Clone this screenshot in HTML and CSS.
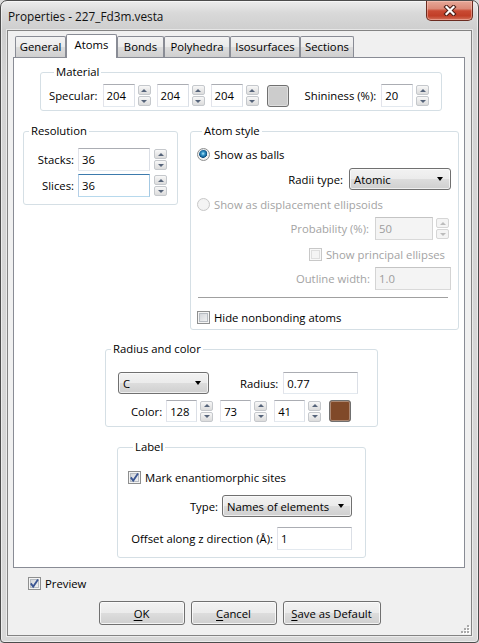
FILE: index.html
```html
<!DOCTYPE html>
<html lang="en">
<head>
<meta charset="utf-8">
<title>Properties - 227_Fd3m.vesta</title>
<link rel="stylesheet" href="styles.css">
</head>
<body>
<div class="window">
  <div class="titlebar">
    <span class="title">Properties - 227_Fd3m.vesta</span>
    <span class="close">
      <svg width="14" height="11" viewBox="0 0 14 11">
        <path d="M3.5 2 L10.5 9 M10.5 2 L3.5 9" stroke="#4a1d16" stroke-width="4.2" stroke-linecap="square"/>
        <path d="M3.5 2 L10.5 9 M10.5 2 L3.5 9" stroke="#fff" stroke-width="2.2" stroke-linecap="square"/>
      </svg>
    </span>
  </div>

  <div class="client">
    <div class="tabs">
      <span class="tab t-general">General</span>
      <span class="tab active t-atoms">Atoms</span>
      <span class="tab t-bonds">Bonds</span>
      <span class="tab t-poly">Polyhedra</span>
      <span class="tab t-iso">Isosurfaces</span>
      <span class="tab t-sect">Sections</span>
    </div>

    <div class="panel">
      <fieldset class="group material">
        <legend>Material</legend>
        <div class="row">
          <span class="lbl">Specular:</span>
          <span class="field w32 ml5">204</span><span class="spin ml3"><i></i><i class="down"></i></span>
          <span class="field w32 ml6">204</span><span class="spin ml3"><i></i><i class="down"></i></span>
          <span class="field w32 ml6">204</span><span class="spin ml3"><i></i><i class="down"></i></span>
          <span class="swatch grey ml8"></span>
          <span class="lbl ml16">Shininess (%):</span>
          <span class="field w32 ml5">20</span><span class="spin ml3"><i></i><i class="down"></i></span>
        </div>
      </fieldset>

      <div class="mid">
        <fieldset class="group resolution">
          <legend>Resolution</legend>
          <div class="row end first">
            <span class="lbl">Stacks:</span>
            <span class="field w72 ml4">36</span><span class="spin ml4"><i></i><i class="down"></i></span>
          </div>
          <div class="row end second">
            <span class="lbl">Slices:</span>
            <span class="field w72 ml4 focus">36</span><span class="spin ml4"><i></i><i class="down"></i></span>
          </div>
        </fieldset>

        <fieldset class="group atom-style">
          <legend>Atom style</legend>
          <div class="opt r-balls"><span class="radio on"></span>Show as balls</div>
          <div class="row end r-radii">
            <span class="lbl">Radii type:</span>
            <span class="combo w102 ml6">Atomic</span>
          </div>
          <div class="opt off r-ellip"><span class="radio"></span>Show as displacement ellipsoids</div>
          <div class="row end off r-prob">
            <span class="lbl">Probability (%):</span>
            <span class="field w58 ml6 dis">50</span><span class="spin ml3 dis"><i></i><i class="down"></i></span>
          </div>
          <div class="opt off end r-principal"><span class="cb dis"></span>Show principal ellipses</div>
          <div class="row end off r-outline">
            <span class="lbl">Outline width:</span>
            <span class="field w76 ml5 dis">1.0</span>
          </div>
          <hr class="sep">
          <div class="opt r-hide"><span class="cb"></span>Hide nonbonding atoms</div>
        </fieldset>
      </div>

      <fieldset class="group radius">
        <legend>Radius and color</legend>
        <div class="row r-elem">
          <span class="combo w91">C</span>
          <span class="lbl ml31">Radius:</span>
          <span class="field w75 h22 ml5">0.77</span>
        </div>
        <div class="row r-color">
          <span class="lbl">Color:</span>
          <span class="field w31 h22 ml4">128</span><span class="spin ml3"><i></i><i class="down"></i></span>
          <span class="field w31 h22 ml7">73</span><span class="spin ml3"><i></i><i class="down"></i></span>
          <span class="field w31 h22 ml7">41</span><span class="spin ml3"><i></i><i class="down"></i></span>
          <span class="swatch brown ml8"></span>
        </div>
      </fieldset>

      <fieldset class="group label">
        <legend>Label</legend>
        <div class="opt r-mark">
          <span class="cb">
            <svg width="11" height="11" viewBox="0 0 11 11"><path d="M1.8 5.4 L4.2 8.6 L9 1.6" fill="none" stroke="#3a5592" stroke-width="1.8"/></svg>
          </span>Mark enantiomorphic sites
        </div>
        <div class="row end r-type">
          <span class="lbl">Type:</span>
          <span class="combo w130 ml4">Names of elements</span>
        </div>
        <div class="row end r-offset">
          <span class="lbl">Offset along z direction (Å):</span>
          <span class="field w75 ml4">1</span>
        </div>
      </fieldset>
    </div>

    <div class="opt preview">
      <span class="cb">
        <svg width="11" height="11" viewBox="0 0 11 11"><path d="M1.8 5.4 L4.2 8.6 L9 1.6" fill="none" stroke="#3a5592" stroke-width="1.8"/></svg>
      </span>Preview
    </div>

    <div class="buttons">
      <span class="btn w86"><u>O</u>K</span>
      <span class="btn w86"><u>C</u>ancel</span>
      <span class="btn w98"><u>S</u>ave as Default</span>
    </div>

    <svg class="grip" width="10" height="10" viewBox="0 0 10 10">
      <g fill="#fff"><rect x="8" y="2" width="2" height="2"/><rect x="8" y="5" width="2" height="2"/><rect x="5" y="5" width="2" height="2"/><rect x="8" y="8" width="2" height="2"/><rect x="5" y="8" width="2" height="2"/><rect x="2" y="8" width="2" height="2"/></g>
      <g fill="#a9a9a9"><rect x="7" y="1" width="2" height="2"/><rect x="7" y="4" width="2" height="2"/><rect x="4" y="4" width="2" height="2"/><rect x="7" y="7" width="2" height="2"/><rect x="4" y="7" width="2" height="2"/><rect x="1" y="7" width="2" height="2"/></g>
    </svg>
  </div>
</div>
</body>
</html>
```

FILE: styles.css
```css
* { box-sizing: border-box; }

html, body {
  margin: 0;
  padding: 0;
}

body {
  width: 479px;
  height: 643px;
  overflow: hidden;
  background: #dcdcdc;
  font-family: "Open Sans", "Noto Sans", sans-serif;
  font-size: 11.3px;
  color: #000;
}

/* ---------- window frame ---------- */
.window {
  width: 479px;
  height: 643px;
  border: 1px solid #4c4c4c;
  border-radius: 7px 7px 4px 4px;
  background: linear-gradient(180deg, #ececec 0, #d9d9d9 12px, #cecece 29px, #d4d4d4 80px, #d8d8d8 100%);
  padding: 0 6px 6px;
  display: flex;
  flex-direction: column;
  box-shadow: inset 0 0 0 1px rgba(255, 255, 255, 0.55);
}

.titlebar {
  height: 29px;
  display: flex;
  align-items: flex-start;
}

.title {
  flex: 1;
  font-size: 11.8px;
  line-height: 30px;
  padding-left: 1px;
  color: #111;
}

.close {
  width: 47px;
  height: 20px;
  margin-right: -1px;
  display: flex;
  align-items: center;
  justify-content: center;
  border: 1px solid #6b2b20;
  border-top: none;
  border-radius: 0 0 5px 5px;
  background: linear-gradient(180deg, #e7a898 0, #dc8a78 40%, #c94a33 52%, #c13e27 78%, #d3715a 100%);
  box-shadow: inset 0 0 0 1px rgba(255, 210, 200, 0.45);
}

.client {
  position: relative;
  flex: 1;
  border: 1px solid #838383;
  background: #f0f0f0;
  display: flex;
  flex-direction: column;
  box-shadow: 0 0 0 1px rgba(255, 255, 255, 0.5);
}

/* ---------- tabs ---------- */
.tabs {
  display: flex;
  align-items: flex-end;
  padding: 3px 0 0 7px;
}

.tab {
  height: 21px;
  line-height: 19px;
  text-align: center;
  border: 1px solid #898c95;
  border-bottom: none;
  border-radius: 2px 2px 0 0;
  background: linear-gradient(180deg, #f3f3f3 0, #ebebeb 50%, #dddddd 50%, #cfcfcf 100%);
}

.tab + .tab { margin-left: 0; }

.tab.active {
  z-index: 1;
  height: 24px;
  margin-bottom: -1px;
  line-height: 20px;
  background: #fff;
}

.t-general { width: 51px; }
.t-atoms { width: 51px; }
.t-bonds { width: 47px; }
.t-poly { width: 66px; }
.t-iso { width: 70px; }
.t-sect { width: 54px; }

.panel {
  height: 511px;
  margin: 0 6px 0 5px;
  border: 1px solid #898c95;
  background: #fff;
  display: flex;
  flex-direction: column;
}

/* ---------- group boxes ---------- */
.group {
  margin: 0;
  padding: 0;
  min-width: 0;
  border: 1px solid #d5dfe5;
  border-radius: 3px;
  background: #fff;
}

.group legend {
  margin-left: 5px;
  padding: 0 2px;
  line-height: 14px;
}

.row {
  display: flex;
  align-items: center;
}

.row.end { justify-content: flex-end; }

.opt {
  display: flex;
  align-items: center;
  height: 17px;
}

.opt.end { justify-content: flex-end; }

.off { color: #a3a3a3; }

.material {
  margin: 7px 0 0 26px;
  width: 402px;
  padding: 5px 8px 3px 8px;
}

.mid {
  display: flex;
  align-items: flex-start;
  margin-top: 13px;
}

.resolution {
  margin-left: 9px;
  width: 155px;
  padding: 0 10px 7px 0;
}

.resolution .first { margin-top: 10px; }
.resolution .second { margin-top: 3px; }

.atom-style {
  margin-left: 12px;
  width: 269px;
  padding: 0 7px 3px 6px;
}

.r-balls { margin-top: 8px; }
.r-radii { margin-top: 5px; }
.r-ellip { margin-top: 6px; }
.r-prob { margin-top: 4px; margin-right: 2px; }
.r-principal { margin-top: 6px; margin-right: 6px; }
.r-outline { margin-top: 4px; }
.r-hide { margin-top: 10px; }

.sep {
  margin: 7px 3px 0 1px;
  height: 2px;
  border: none;
  border-top: 1px solid #a0a0a0;
  border-bottom: 1px solid #fff;
}

.radius {
  margin: 12px 0 0 91px;
  width: 273px;
  padding: 0 0 4px 0;
}

.r-elem { margin: 16px 0 0 12px; }
.r-color { margin: 6px 0 0 25px; }

.label {
  margin: 13px 0 0 103px;
  width: 249px;
  padding: 0 13px 7px 10px;
}

.r-mark { margin-top: 15px; }
.r-type { margin-top: 9px; }
.r-offset { margin-top: 10px; }

/* ---------- controls ---------- */
.field {
  display: inline-flex;
  align-items: center;
  height: 23px;
  padding: 0 3px;
  border: 1px solid;
  border-color: #abadb3 #dbdfe6 #e3e9ef #e2e3ea;
  background: #fff;
  white-space: nowrap;
}

.field.h22 { height: 22px; }

.field.focus {
  border-color: #3d7bad #a4c9e3 #b7d9ed #b5cfe7;
}

.field.dis {
  background: #f4f4f4;
  border-color: #c4c4c4 #d4d4d4 #d9d9d9 #d4d4d4;
  color: #9d9d9d;
}

.spin {
  display: inline-flex;
  flex-direction: column;
  width: 13px;
  height: 21px;
  gap: 1px;
}

.spin i {
  flex: 1;
  display: flex;
  align-items: center;
  justify-content: center;
  border: 1px solid #c5c8cc;
  border-radius: 2px;
  background: linear-gradient(180deg, #f8f8f8 0, #e9e9e9 50%, #dcdcdc 100%);
}

.spin i::before {
  content: "";
  border: 3px solid transparent;
  border-top: 0;
  border-bottom: 3px solid #56647a;
}

.spin i.down::before {
  border-bottom: 0;
  border-top: 3px solid #56647a;
}

.spin.dis i { border-color: #d6d6d6; background: #f4f4f4; }
.spin.dis i::before { border-bottom-color: #bcbcbc; }
.spin.dis i.down::before { border-top-color: #bcbcbc; }

.swatch {
  width: 22px;
  height: 22px;
  border: 1px solid #707070;
  border-radius: 3px;
  box-shadow: inset 0 0 0 1px rgba(255, 255, 255, 0.35);
}

.swatch.grey { background: #cccccc; }
.swatch.brown { background: rgb(128, 73, 41); }

.combo {
  display: inline-flex;
  align-items: center;
  justify-content: space-between;
  height: 22px;
  padding: 0 7px 0 4px;
  border: 1px solid #707070;
  border-radius: 3px;
  background: linear-gradient(180deg, #f2f2f2 0, #ebebeb 50%, #dddddd 50%, #cfcfcf 100%);
  box-shadow: inset 0 0 0 1px rgba(252, 252, 252, 0.7);
  white-space: nowrap;
}

.combo::after {
  content: "";
  border: 3.5px solid transparent;
  border-bottom: 0;
  border-top: 4px solid #000;
}

.radio {
  flex: none;
  width: 13px;
  height: 13px;
  margin-right: 4px;
  border-radius: 50%;
  border: 1px solid #8e8f8f;
  background: radial-gradient(circle at 50% 50%, #f7f7f7 0, #dcdcdc 100%);
  box-shadow: inset 0 0 0 1px #f2f2f2;
}

.radio.on {
  background: radial-gradient(circle at 46% 42%, #bdeafa 0, #3b9ccd 1.6px, #17669c 3.2px, #0f4f7e 3.9px, #f2f2f2 4.5px, #dcdcdc 100%);
}

.off .radio {
  border-color: #c8c8c8;
  background: #f4f4f4;
}

.cb {
  flex: none;
  display: inline-flex;
  align-items: center;
  justify-content: center;
  width: 13px;
  height: 13px;
  margin-right: 4px;
  border: 1px solid #8e8f8f;
  background: linear-gradient(135deg, #cdd0d5 0, #f7f7f7 100%);
  box-shadow: inset 0 0 0 1px #f4f4f4, inset 0 0 0 2px #b7bcc2;
}

.cb.dis {
  border-color: #c8c8c8;
  background: #f4f4f4;
  box-shadow: inset 0 0 0 1px #f8f8f8, inset 0 0 0 2px #dedede;
}

/* ---------- bottom bar ---------- */
.preview {
  margin: 7px 0 0 20px;
}

.buttons {
  display: flex;
  justify-content: center;
  gap: 6px;
  margin-top: 9px;
}

.btn {
  display: inline-flex;
  align-items: center;
  justify-content: center;
  height: 24px;
  border: 1px solid #707070;
  border-radius: 3px;
  background: linear-gradient(180deg, #f2f2f2 0, #ebebeb 50%, #dddddd 50%, #cfcfcf 100%);
  box-shadow: inset 0 0 0 1px rgba(252, 252, 252, 0.8);
}

.btn u { text-decoration-thickness: 1px; text-underline-offset: 2px; }

.grip {
  position: absolute;
  right: 1px;
  bottom: 1px;
}

/* ---------- sizes and gaps ---------- */
.w31 { width: 31px; }
.w32 { width: 32px; }
.w58 { width: 58px; }
.w72 { width: 72px; }
.w75 { width: 75px; }
.w76 { width: 76px; }
.w86 { width: 86px; }
.w91 { width: 91px; }
.w98 { width: 98px; }
.w102 { width: 102px; }
.w130 { width: 130px; }

.ml3 { margin-left: 3px; }
.ml4 { margin-left: 4px; }
.ml5 { margin-left: 5px; }
.ml6 { margin-left: 6px; }
.ml7 { margin-left: 7px; }
.ml8 { margin-left: 8px; }
.ml16 { margin-left: 16px; }
.ml31 { margin-left: 31px; }
```
